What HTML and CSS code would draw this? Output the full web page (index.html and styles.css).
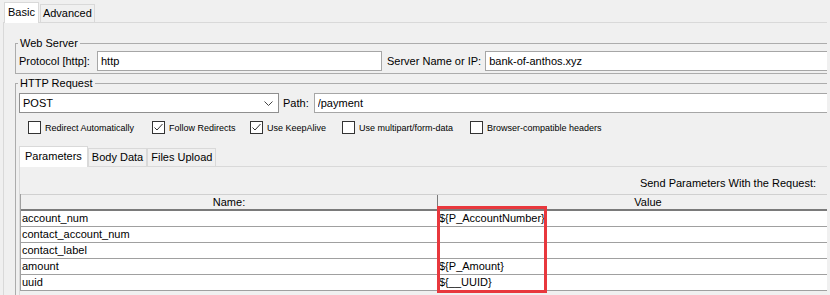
FILE: index.html
```html
<!DOCTYPE html>
<html lang="en">
  <head>
    <meta charset="UTF-8" />
    <title>HTTP Request</title>
    <link rel="stylesheet" href="styles.css">
  </head>
  <body>
    <div class="tabs main-tabs">
      <div class="tab active">Basic</div>
      <div class="tab">Advanced</div>
    </div>

    <div class="tab-panel basic-panel">
      <fieldset class="group web-server">
        <legend>Web Server</legend>
        <div class="row">
          <label class="lbl lbl-protocol">Protocol [http]:</label>
          <input class="field protocol" type="text" value="http">
          <label class="lbl lbl-server">Server Name or IP:</label>
          <input class="field grow" type="text" value="bank-of-anthos.xyz">
        </div>
      </fieldset>

      <fieldset class="group http-request">
        <legend>HTTP Request</legend>
        <div class="row">
          <div class="combo">
            <span>POST</span>
            <svg width="9" height="5" viewBox="0 0 9 5"><polyline points="0.5,0.5 4.5,4.5 8.5,0.5" fill="none" stroke="#444" stroke-width="1"/></svg>
          </div>
          <label class="lbl lbl-path">Path:</label>
          <input class="field grow" type="text" value="/payment">
        </div>

        <div class="checks">
          <div class="check"><span class="cb"></span>Redirect Automatically</div>
          <div class="check"><span class="cb"><svg width="11" height="11" viewBox="0 0 11 11"><polyline points="1.5,5.5 4,8 9.5,2" fill="none" stroke="#333" stroke-width="1"/></svg></span>Follow Redirects</div>
          <div class="check"><span class="cb"><svg width="11" height="11" viewBox="0 0 11 11"><polyline points="1.5,5.5 4,8 9.5,2" fill="none" stroke="#333" stroke-width="1"/></svg></span>Use KeepAlive</div>
          <div class="check"><span class="cb"></span>Use multipart/form-data</div>
          <div class="check"><span class="cb"></span>Browser-compatible headers</div>
        </div>

        <div class="tabs sub-tabs">
          <div class="tab active">Parameters</div>
          <div class="tab">Body Data</div>
          <div class="tab">Files Upload</div>
        </div>

        <div class="tab-panel params-panel">
          <div class="send-label">Send Parameters With the Request:</div>
          <div class="param-table">
            <div class="thead">
              <div class="th th-name">Name:</div>
              <div class="th">Value</div>
            </div>
            <div class="tr"><div class="td td-name">account_num</div><div class="td">${P_AccountNumber}</div></div>
            <div class="tr"><div class="td td-name">contact_account_num</div><div class="td"></div></div>
            <div class="tr"><div class="td td-name">contact_label</div><div class="td"></div></div>
            <div class="tr"><div class="td td-name">amount</div><div class="td">${P_Amount}</div></div>
            <div class="tr"><div class="td td-name">uuid</div><div class="td">${__UUID}</div></div>
            <div class="highlight"></div>
          </div>
        </div>
      </fieldset>
    </div>
  </body>
</html>
```

FILE: styles.css
```css
body {
  margin: 0;
  width: 830px;
  height: 295px;
  overflow: hidden;
  background: #f0f0f0;
  color: #000;
  font-family: "Liberation Sans", Arial, sans-serif;
  font-size: 11px;
}
.tabs {
  display: flex;
  align-items: flex-end;
}
.tab {
  box-sizing: border-box;
  height: 18px;
  line-height: 17px;
  padding: 0 3px;
  border: 1px solid #d9d9d9;
  border-bottom: none;
  background: #f0f0f0;
  white-space: nowrap;
}
.tab.active {
  position: relative;
  z-index: 1;
  height: 21px;
  line-height: 19px;
  margin-bottom: -1px;
  background: #fff;
}
.main-tabs {
  height: 22px;
  padding-left: 4px;
}
.main-tabs .tab {
  padding: 0 2px;
}
.main-tabs .tab.active {
  padding: 0 3px;
  margin-right: 1px;
}
.tab-panel {
  border-top: 1px solid #d9d9d9;
  border-left: 1px solid #d9d9d9;
}
.basic-panel {
  width: 812px;
  height: 272px;
  margin-left: 3px;
  padding: 13px 0 0 11px;
  overflow: hidden;
}
.group {
  margin: 0 -20px 0 0;
  min-width: 0;
  padding: 1px 3px 2px;
  border: 1px solid #acacac;
}
.group legend {
  margin-left: -1px;
  padding: 0 2px;
  line-height: 14px;
}
.http-request {
  margin-top: 2px;
  padding-top: 3px;
  height: 240px;
}
.row {
  display: flex;
  align-items: center;
  height: 20px;
}
.lbl {
  white-space: nowrap;
}
.lbl-protocol {
  width: 78px;
}
.lbl-server {
  margin: 0 4px 0 5px;
}
.lbl-path {
  margin: 0 5px 0 4px;
}
.field {
  box-sizing: border-box;
  height: 20px;
  margin: 0;
  padding: 0 3px;
  border: 1px solid #a6a6a6;
  background: #fff;
  color: #000;
  font: inherit;
  outline: none;
}
.protocol {
  width: 285px;
}
.grow {
  flex: 1;
  min-width: 0;
}
.combo {
  box-sizing: border-box;
  display: flex;
  align-items: center;
  justify-content: space-between;
  width: 260px;
  height: 20px;
  padding: 0 5px 0 3px;
  border: 1px solid #8f8f8f;
  background: #fff;
}
.checks {
  display: grid;
  grid-template-columns: 124px 98px 92px 128px auto;
  height: 15px;
  margin-top: 7px;
  padding-left: 9px;
  font-size: 9px;
}
.check {
  display: flex;
  align-items: center;
  gap: 4px;
  white-space: nowrap;
}
.cb {
  box-sizing: border-box;
  display: flex;
  width: 13px;
  height: 13px;
  border: 1px solid #333;
  background: #fff;
}
.sub-tabs {
  height: 20px;
  margin-top: 11px;
}
.sub-tabs .tab.active {
  padding: 0 5px;
}
.params-panel {
  height: 150px;
  padding-top: 9px;
}
.send-label {
  width: 796px;
  margin-bottom: 4px;
  line-height: 14px;
  text-align: right;
}
.param-table {
  position: relative;
  border-left: 1px solid #a0a0a0;
}
.thead,
.tr {
  display: grid;
  grid-template-columns: 417px 420px;
}
.thead {
  box-sizing: border-box;
  height: 17px;
  border-top: 1px solid #d0d0d0;
  border-bottom: 2px solid #7a7a7a;
  background: #f0f0f0;
}
.th {
  line-height: 14px;
  text-align: center;
}
.th-name {
  border-right: 1px solid #7a7a7a;
}
.tr {
  box-sizing: border-box;
  height: 16px;
  border-bottom: 1px solid #a0a0a0;
  background: #fff;
}
.td {
  padding-left: 1px;
  line-height: 15px;
  white-space: nowrap;
}
.td-name {
  border-right: 1px solid #e0e0e0;
}
.highlight {
  position: absolute;
  left: 416px;
  top: 12px;
  box-sizing: border-box;
  width: 110px;
  height: 87px;
  border: 3px solid #e8383d;
}
```
